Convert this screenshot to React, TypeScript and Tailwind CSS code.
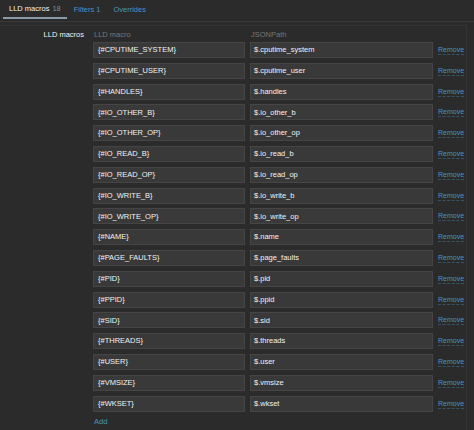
const macros: [string, string][] = [
  ["{#CPUTIME_SYSTEM}", "$.cputime_system"],
  ["{#CPUTIME_USER}", "$.cputime_user"],
  ["{#HANDLES}", "$.handles"],
  ["{#IO_OTHER_B}", "$.io_other_b"],
  ["{#IO_OTHER_OP}", "$.io_other_op"],
  ["{#IO_READ_B}", "$.io_read_b"],
  ["{#IO_READ_OP}", "$.io_read_op"],
  ["{#IO_WRITE_B}", "$.io_write_b"],
  ["{#IO_WRITE_OP}", "$.io_write_op"],
  ["{#NAME}", "$.name"],
  ["{#PAGE_FAULTS}", "$.page_faults"],
  ["{#PID}", "$.pid"],
  ["{#PPID}", "$.ppid"],
  ["{#SID}", "$.sid"],
  ["{#THREADS}", "$.threads"],
  ["{#USER}", "$.user"],
  ["{#VMSIZE}", "$.vmsize"],
  ["{#WKSET}", "$.wkset"],
]

const App = () => {
  return (
    <div
      className="w-[474px] h-[430px] overflow-hidden bg-[#2b2b2b] text-[7.5px] leading-none text-[#f2f2f2]"
      style={{ fontFamily: '"Liberation Sans", Arial, sans-serif' }}
    >
      {/* Tabs */}
      <div className="h-[22px] flex items-start border-b border-[#383838] pl-[3px]">
        <div className="h-[19px] px-[6px] pt-[1px] flex items-center border-b-2 border-[#8a9aa6]">
          <span className="text-[#f2f2f2]">LLD macros</span>
          <span className="ml-[3px] text-[#8a8a8a]">18</span>
        </div>
        <div className="h-[18px] ml-[7px] pt-[1px] flex items-center text-[#4796c4]">Filters 1</div>
        <div className="h-[18px] ml-[13px] pt-[1px] flex items-center text-[#4796c4]">Overrides</div>
      </div>

      {/* Panel */}
      <div className="w-[467px] h-[408px] mt-[3px] border-t border-r border-[#353535] bg-[#2b2b2b] flex">
        <div className="w-[85px] pt-[5px] pr-[1px] text-right shrink-0">LLD macros</div>
        <div className="pl-[8px] pt-[5px] flex flex-col">
          <div className="flex text-[#777777] h-[10px]">
            <div className="w-[157px] pl-[1px]">LLD macro</div>
            <div className="pl-[1px]">JSONPath</div>
          </div>
          <div className="mt-[1px] flex flex-col gap-[4.8px]">
            {macros.map(([macro, path]) => (
              <div key={macro} className="flex items-center h-[16px]">
                <div className="w-[152px] h-[16px] bg-[#393939] border border-[#454545] flex items-center px-[4px]">
                  {macro}
                </div>
                <div className="ml-[5px] w-[183px] h-[16px] bg-[#393939] border border-[#454545] flex items-center px-[3px]">
                  {path}
                </div>
                <span className="ml-[5px] text-[7px] text-[#4796c4] border-b border-dashed border-[#4796c4]/40 leading-[9px]">
                  Remove
                </span>
              </div>
            ))}
          </div>
          <div className="mt-[6px] pl-[1px] text-[#4796c4]">Add</div>
        </div>
      </div>
    </div>
  )
}

export default App
